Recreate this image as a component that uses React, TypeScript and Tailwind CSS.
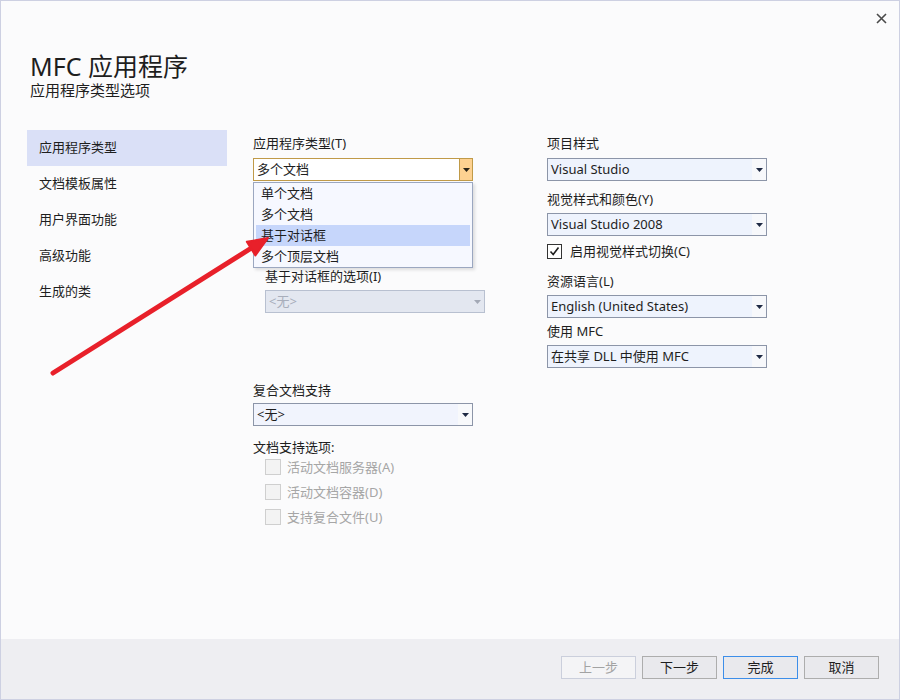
import React from "react";

function Arrow({ color = "#1f2a44" }: { color?: string }) {
  return (
    <svg width="7" height="4" viewBox="0 0 7 4">
      <polygon points="0,0 7,0 3.5,4" fill={color} />
    </svg>
  );
}

function Combo({ text, className = "" }: { text: string; className?: string }) {
  return (
    <div className={`flex h-[23px] w-[220px] border border-[#8c95a8] bg-[#eef3fd] ${className}`}>
      <div className="flex flex-1 items-center pl-[3px] text-[13px] leading-[21px] text-[#1e1e1e]">{text}</div>
      <div className="flex w-[14px] items-center justify-center bg-[#f7f8fb]">
        <Arrow />
      </div>
    </div>
  );
}

function Label({ children, className = "" }: { children: React.ReactNode; className?: string }) {
  return <div className={`h-[20px] text-[13px] leading-[20px] text-[#1e1e1e] ${className}`}>{children}</div>;
}

function DisabledBox({ label }: { label: string }) {
  return (
    <div className="flex h-[25px] items-start pl-[12px]">
      <div className="h-[16px] w-[16px] border border-[#cfcfcf] bg-[#f3f3f3]" />
      <div className="ml-[6px] text-[13px] leading-[16px] text-[#a6a6a6]">{label}</div>
    </div>
  );
}

export default function App() {
  const navItems = ["应用程序类型", "文档模板属性", "用户界面功能", "高级功能", "生成的类"];
  return (
    <div className="relative flex h-[700px] w-[900px] flex-col border border-[#cdd0e2] bg-[#fbfbfc] [font-family:'Noto_Sans','Noto_Sans_CJK_SC',sans-serif] text-[#1e1e1e]">
      {/* Header */}
      <div className="flex items-start justify-between">
        <div className="pl-[29px] pt-[50px]">
          <div className="text-[25px] leading-[30px] text-[#1e1e1e]">MFC 应用程序</div>
          <div className="text-[15px] leading-[18px] text-[#1e1e1e]">应用程序类型选项</div>
        </div>
        <div className="mr-[12px] mt-[11px] flex h-[12px] w-[12px] items-center justify-center">
          <svg width="11" height="11" viewBox="0 0 11 11">
            <path d="M1 1 L10 10 M10 1 L1 10" stroke="#4a4a4a" strokeWidth="1.6" />
          </svg>
        </div>
      </div>

      {/* Body */}
      <div className="flex flex-1 pl-[26px] pt-[31px]">
        {/* Nav */}
        <div className="flex w-[200px] flex-col">
          {navItems.map((t, i) => (
            <div
              key={t}
              className={`flex h-[36px] items-center pl-[12px] text-[13px] ${i === 0 ? "bg-[#dae0f7]" : ""}`}
            >
              {t}
            </div>
          ))}
        </div>

        {/* Middle column */}
        <div className="ml-[26px] flex w-[232px] flex-col pt-[3px]">
          <Label>应用程序类型(T)</Label>
          <div className="relative mt-[5px]">
            <div className="flex h-[23px] w-[220px] border border-[#c09a48] bg-white">
              <div className="flex flex-1 items-center pl-[3px] text-[13px] leading-[21px]">多个文档</div>
              <div className="flex w-[13px] items-center justify-center border-l border-[#c09a48] bg-[#fdd191]">
                <Arrow color="#2a2418" />
              </div>
            </div>
            <div className="absolute left-0 top-[24px] z-10 w-[220px] border border-[#9ba7c0] bg-[#f6f8ff] px-[2px] shadow-[2px_2px_3px_rgba(0,0,0,0.12)]">
              {["单个文档", "多个文档", "基于对话框", "多个顶层文档"].map((t) => (
                <div
                  key={t}
                  className={`flex h-[21px] items-center pl-[5px] text-[13px] ${t === "基于对话框" ? "bg-[#c6d6fb]" : ""}`}
                >
                  {t}
                </div>
              ))}
            </div>
          </div>
          <Label className="ml-[12px] mt-[85px]">基于对话框的选项(I)</Label>
          <div className="ml-[12px] mt-[4px] flex h-[23px] w-[220px] border border-[#b8c0d0] bg-[#e3e7f0]">
            <div className="flex flex-1 items-center pl-[3px] text-[13px] text-[#a8aebb]">&lt;无&gt;</div>
            <div className="flex w-[14px] items-center justify-center">
              <Arrow color="#a3a9b6" />
            </div>
          </div>
          <Label className="mt-[67px]">复合文档支持</Label>
          <div className="mt-[3px] flex h-[23px] w-[220px] border border-[#8c95a8] bg-[#f1f4fd]">
            <div className="flex flex-1 items-center pl-[3px] text-[13px]">&lt;无&gt;</div>
            <div className="flex w-[14px] items-center justify-center bg-[#f8f9fb]">
              <Arrow />
            </div>
          </div>
          <Label className="mt-[11px]">文档支持选项:</Label>
          <div className="mt-[2px] flex flex-col">
            <DisabledBox label="活动文档服务器(A)" />
            <DisabledBox label="活动文档容器(D)" />
            <DisabledBox label="支持复合文件(U)" />
          </div>
        </div>

        {/* Right column */}
        <div className="ml-[62px] flex w-[220px] flex-col pt-[3px]">
          <Label>项目样式</Label>
          <Combo text="Visual Studio" className="mt-[5px]" />
          <Label className="mt-[8px]">视觉样式和颜色(Y)</Label>
          <Combo text="Visual Studio 2008" className="mt-[4px]" />
          <div className="mt-[8px] flex h-[15px] items-center">
            <div className="flex h-[15px] w-[15px] items-center justify-center border border-[#333333] bg-white">
              <svg width="11" height="11" viewBox="0 0 11 11">
                <path d="M1.5 5.5 L4.2 8.5 L9.5 1.5" stroke="#1e1e1e" strokeWidth="1.6" fill="none" />
              </svg>
            </div>
            <div className="ml-[8px] text-[13px] leading-[15px]">启用视觉样式切换(C)</div>
          </div>
          <Label className="mt-[12px]">资源语言(L)</Label>
          <Combo text="English (United States)" className="mt-[4px]" />
          <Label className="mt-[3px]">使用 MFC</Label>
          <Combo text="在共享 DLL 中使用 MFC" className="mt-[4px]" />
        </div>
      </div>

      {/* Footer */}
      <div className="flex h-[60px] items-start justify-end gap-[6px] bg-[#eeeef2] pr-[20px] pt-[17px]">
        <div className="flex h-[23px] w-[75px] items-center justify-center border border-[#cbcfdc] bg-[#f4f4f6] text-[13px] text-[#a3a3a3]">
          上一步
        </div>
        <div className="flex h-[23px] w-[75px] items-center justify-center border border-[#adadad] bg-[#e9e9ed] text-[13px]">
          下一步
        </div>
        <div className="flex h-[23px] w-[75px] items-center justify-center border border-[#3d8ee9] bg-[#e9e9ed] text-[13px]">
          完成
        </div>
        <div className="flex h-[23px] w-[75px] items-center justify-center border border-[#adadad] bg-[#e9e9ed] text-[13px]">
          取消
        </div>
      </div>

      {/* Red annotation arrow */}
      <svg
        className="pointer-events-none absolute left-[-1px] top-[-1px] z-20"
        width="900"
        height="700"
        viewBox="0 0 900 700"
      >
        <line x1="53" y1="373" x2="253" y2="247" stroke="#e8202a" strokeWidth="5" strokeLinecap="round" />
        <polygon points="268,238 246.8,241.8 255.4,255.4" fill="#e8202a" stroke="#e8202a" strokeWidth="2" strokeLinejoin="round" />
      </svg>
    </div>
  );
}
